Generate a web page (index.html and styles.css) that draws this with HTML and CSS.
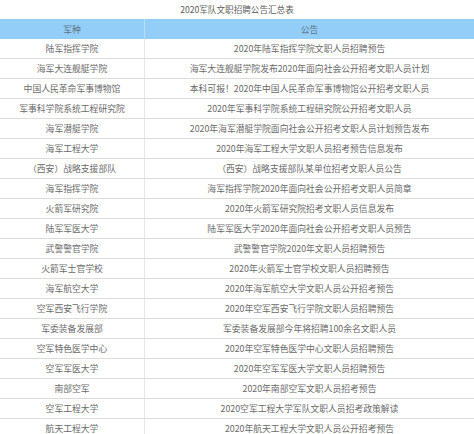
FILE: index.html
```html
<!DOCTYPE html>
<html lang="zh">
<head>
<meta charset="utf-8">
<link rel="stylesheet" href="styles.css">
</head>
<body>
<div class="title">2020军队文职招聘公告汇总表</div>
<table class="sheet">
<thead>
<tr><th class="c1">军种</th><th class="c2">公告</th></tr>
</thead>
<tbody>
<tr><td>陆军指挥学院</td><td>2020年陆军指挥学院文职人员招聘预告</td></tr>
<tr><td>海军大连舰艇学院</td><td>海军大连舰艇学院发布2020年面向社会公开招考文职人员计划</td></tr>
<tr><td>中国人民革命军事博物馆</td><td>本科可报！2020年中国人民革命军事博物馆公开招考文职人员</td></tr>
<tr><td>军事科学院系统工程研究院</td><td>2020年军事科学院系统工程研究院公开招考文职人员</td></tr>
<tr><td>海军潜艇学院</td><td>2020年海军潜艇学院面向社会公开招考文职人员计划预告发布</td></tr>
<tr><td>海军工程大学</td><td>2020年海军工程大学文职人员招考预告信息发布</td></tr>
<tr><td>（西安）战略支援部队</td><td>（西安）战略支援部队某单位招考文职人员公告</td></tr>
<tr><td>海军指挥学院</td><td>海军指挥学院2020年面向社会公开招考文职人员简章</td></tr>
<tr><td>火箭军研究院</td><td>2020年火箭军研究院招考文职人员信息发布</td></tr>
<tr><td>陆军军医大学</td><td>陆军军医大学2020年面向社会公开招考文职人员预告</td></tr>
<tr><td>武警警官学院</td><td>武警警官学院2020年文职人员招聘预告</td></tr>
<tr><td>火箭军士官学校</td><td>2020年火箭军士官学校文职人员招聘预告</td></tr>
<tr><td>海军航空大学</td><td>2020年海军航空大学文职人员公开招考预告</td></tr>
<tr><td>空军西安飞行学院</td><td>2020年空军西安飞行学院文职人员招聘预告</td></tr>
<tr><td>军委装备发展部</td><td>军委装备发展部今年将招聘100余名文职人员</td></tr>
<tr><td>空军特色医学中心</td><td>2020年空军特色医学中心文职人员招聘预告</td></tr>
<tr><td>空军军医大学</td><td>2020年空军军医大学文职人员招聘预告</td></tr>
<tr><td>南部空军</td><td>2020年南部空军文职人员招考预告</td></tr>
<tr><td>空军工程大学</td><td>2020空军工程大学军队文职人员招考政策解读</td></tr>
<tr><td>航天工程大学</td><td>2020年航天工程大学文职人员公开招考预告</td></tr>
</tbody>
</table>
</body>
</html>
```
FILE: styles.css
```css
html, body {
  margin: 0;
  padding: 0;
  background: #ffffff;
}
body {
  width: 474px;
  height: 434px;
  overflow: hidden;
  font-family: "Noto Sans CJK SC", "Liberation Sans", sans-serif;
  color: #6a6a6a;
}
.title {
  height: 19px;
  line-height: 19px;
  font-size: 8.6px;
  text-align: center;
  color: #606060;
}
.sheet {
  width: 474px;
  border-collapse: collapse;
  table-layout: fixed;
  font-size: 8.8px;
}
.sheet th {
  height: 20px;
  padding: 0;
  background: #92cef8;
  font-weight: normal;
  color: #5f7485;
  text-align: center;
}
.sheet .c1 {
  width: 144px;
  border-right: 1px solid #b9def9;
}
.sheet td {
  height: 19px;
  padding: 0;
  text-align: center;
  white-space: nowrap;
  border-bottom: 1px solid #dcdcdc;
  line-height: 19px;
}
.sheet td:first-child {
  border-right: 1px solid #e6e6e6;
}
```
